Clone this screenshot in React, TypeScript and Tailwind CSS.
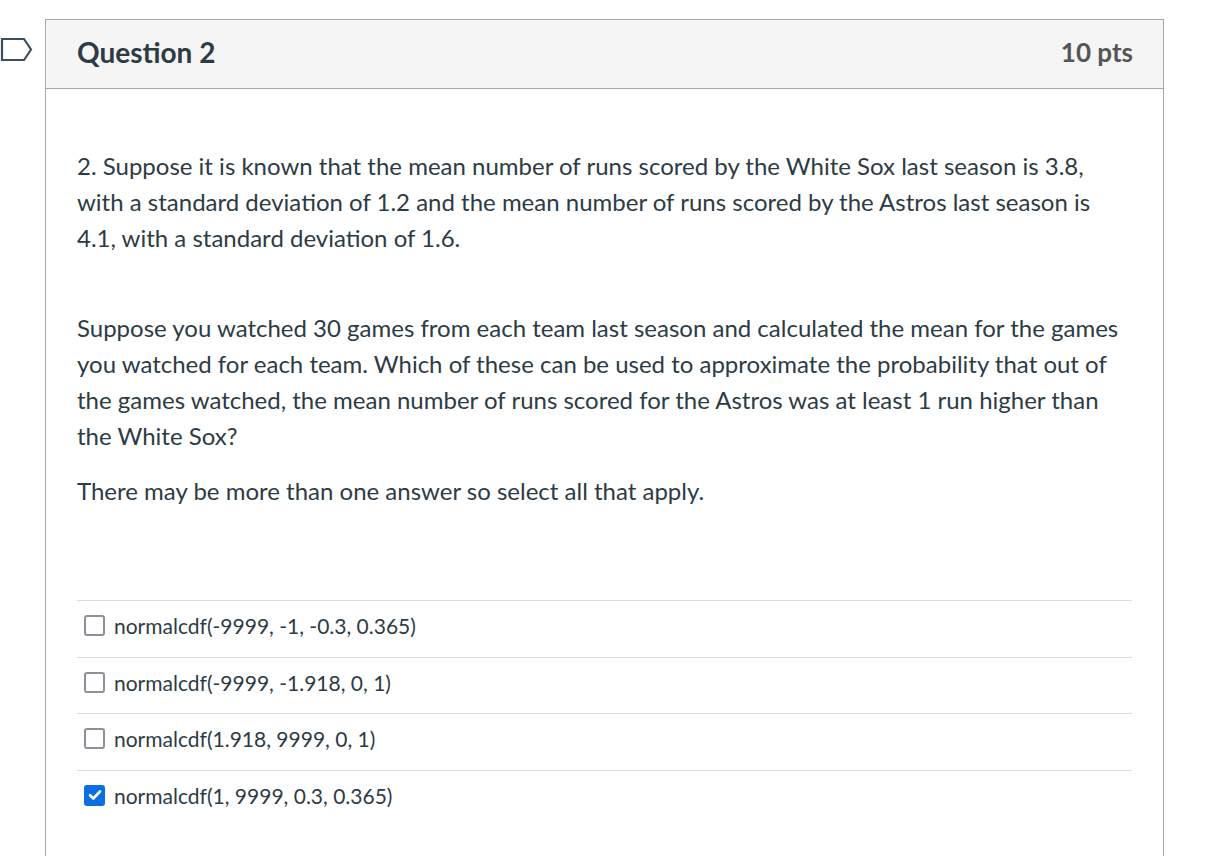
import React from "react";

const answers = [
  { text: "normalcdf(-9999, -1, -0.3, 0.365)", checked: false },
  { text: "normalcdf(-9999, -1.918, 0, 1)", checked: false },
  { text: "normalcdf(1.918, 9999, 0, 1)", checked: false },
  { text: "normalcdf(1, 9999, 0.3, 0.365)", checked: true },
];

function Flag() {
  return (
    <svg width="34" height="26" viewBox="0 0 34 26" className="block">
      <path d="M2 2 H24 L31 12.5 L24 23 H2 Z" fill="none" stroke="#3b4f5f" strokeWidth="2.2" strokeLinejoin="miter" />
    </svg>
  );
}

function Box({ checked }: { checked: boolean }) {
  if (checked) {
    return (
      <div className="w-[21px] h-[21px] rounded-[3px] bg-[#0b6fe3] flex items-center justify-center shrink-0">
        <svg width="14" height="12" viewBox="0 0 14 12">
          <path d="M2 6.2 L5.4 9.5 L12 2.5" fill="none" stroke="#fff" strokeWidth="2.6" strokeLinecap="round" strokeLinejoin="round" />
        </svg>
      </div>
    );
  }
  return <div className="w-[21px] h-[21px] rounded-[3px] border-[2.5px] border-[#8d8f99] bg-white shrink-0" />;
}

export default function App() {
  return (
    <div className="w-[1209px] h-[856px] overflow-hidden bg-white relative font-['Lato','Liberation_Sans',sans-serif] text-[#2d3b45]">
      <div className="absolute left-0 top-[37px]">
        <Flag />
      </div>
      <div className="ml-[45px] mt-[19px] w-[1119px] border border-[#a8a8a8] min-h-[900px]">
        <div className="h-[69px] bg-[#f5f5f5] border-b border-[#a8a8a8] flex items-center justify-between pl-[31px] pr-[30px] pb-[4px]">
          <div className="text-[28px] font-bold text-[#2d3b45] leading-none">Question 2</div>
          <div className="text-[26px] font-bold text-[#555555] leading-none">10 pts</div>
        </div>
        <div className="px-[31px] pt-[59px]">
          <p className="text-[24px] leading-[36px] m-0">
            2. Suppose it is known that the mean number of runs scored by the White Sox last season is 3.8, with a standard deviation of 1.2 and the mean number of runs scored by the Astros last season is 4.1, with a standard deviation of 1.6.
          </p>
          <p className="text-[24px] leading-[36px] mt-[54px]">
            Suppose you watched 30 games from each team last season and calculated the mean for the games you watched for each team. Which of these can be used to approximate the probability that out of the games watched, the mean number of runs scored for the Astros was at least 1 run higher than the White Sox?
          </p>
          <p className="text-[24px] leading-[36px] mt-[19px]">
            There may be more than one answer so select all that apply.
          </p>
          <div className="mt-[91px]">
            {answers.map((a, i) => (
              <div key={i} className="border-t border-[#dcdcdc] h-[56.7px] flex items-center pl-[7px] gap-[9px] pb-[7px]">
                <Box checked={a.checked} />
                <span className="text-[21px] leading-none text-[#2d3b45]">{a.text}</span>
              </div>
            ))}
          </div>
        </div>
      </div>
    </div>
  );
}
